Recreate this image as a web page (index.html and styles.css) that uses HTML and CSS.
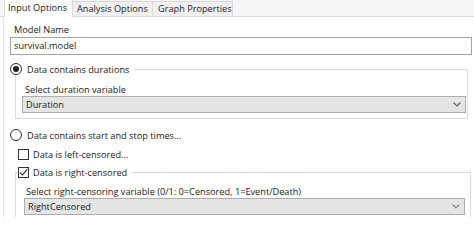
FILE: index.html
```html
<!DOCTYPE html>
<html>
<head>
<meta charset="utf-8">
<link rel="stylesheet" href="styles.css">
</head>
<body>
<div class="tabs">
  <div class="tab active">Input Options</div>
  <div class="tab t2">Analysis Options</div>
  <div class="tab t3">Graph Properties</div>
  <div class="tab-fill"></div>
</div>
<div class="panel">
  <div class="label name-label">Model Name</div>
  <div class="textbox">survival.model</div>

  <div class="group g1">
    <div class="ghead head-radio"><span class="radio on"></span><span>Data contains durations</span></div>
    <div class="label sub1">Select duration variable</div>
    <div class="select sel1"><span>Duration</span><svg class="chev" width="8" height="5" viewBox="0 0 8 5"><path d="M0.5 0.5 L4 4 L7.5 0.5" fill="none" stroke="#606060" stroke-width="1.1"/></svg></div>
  </div>

  <div class="option radio-row"><span class="radio"></span><span>Data contains start and stop times...</span></div>
  <div class="option check-row"><span class="check"></span><span>Data is left-censored...</span></div>

  <div class="group g2">
    <div class="ghead head-check"><span class="check"><svg width="9" height="9" viewBox="0 0 9 9"><path d="M1 4.6 L3.4 7 L8.2 1.4" fill="none" stroke="#222" stroke-width="1.1"/></svg></span><span>Data is right-censored</span></div>
    <div class="label sub2">Select right-censoring variable (0/1: 0=Censored, 1=Event/Death)</div>
    <div class="select sel2"><span>RightCensored</span><svg class="chev" width="8" height="5" viewBox="0 0 8 5"><path d="M0.5 0.5 L4 4 L7.5 0.5" fill="none" stroke="#8a8a8a" stroke-width="1.1"/></svg></div>
  </div>
</div>
</body>
</html>
```
FILE: styles.css
```css
html, body {
  margin: 0;
  padding: 0;
  background: #ffffff;
}
body {
  width: 474px;
  height: 217px;
  overflow: hidden;
  font-family: "Open Sans", "Noto Sans", sans-serif;
  font-size: 9.2px;
  color: #1b1b1b;
}
.tabs {
  display: flex;
  align-items: flex-end;
  height: 17px;
  box-sizing: border-box;
  border-bottom: 1px solid #dcdcdc;
  background: #f5f6f8;
  padding-left: 4px;
}
.tab {
  height: 15px;
  line-height: 14px;
  box-sizing: border-box;
  padding: 0 0 0 4px;
  border: 1px solid #d9d9d9;
  border-bottom: none;
  background: #f0f0f0;
  margin-left: -1px;
  white-space: nowrap;
  overflow: hidden;
}
.tab.active {
  width: 69px;
  height: 18px;
  line-height: 15px;
  margin-left: 0;
  margin-bottom: -1px;
  padding-left: 3px;
  background: #ffffff;
}
.t2 {
  width: 81px;
}
.t3 {
  width: 81px;
  padding-left: 5px;
}
.tab-fill {
  flex: 1;
}
.panel {
  margin-left: 3px;
  border-left: 1px solid #e3e3e3;
  padding: 6px 0 0 6px;
  height: 200px;
}
.label {
  line-height: 14px;
  white-space: nowrap;
}
.name-label {
  margin-left: 4px;
}
.textbox {
  width: 462px;
  height: 18px;
  box-sizing: border-box;
  border: 1px solid #a4a4a4;
  padding-left: 3px;
  line-height: 16px;
}
.group {
  border: 1px solid #dcdcdc;
  box-sizing: border-box;
  margin-left: 5px;
}
.g1 {
  margin-top: 14px;
  width: 453px;
  height: 50px;
}
.g2 {
  margin-top: 11px;
  width: 456px;
  height: 60px;
}
.ghead {
  display: flex;
  align-items: center;
  width: fit-content;
  height: 14px;
  margin-top: -8px;
  padding-right: 5px;
  background: #ffffff;
  white-space: nowrap;
}
.head-radio {
  margin-left: -6px;
}
.head-check {
  margin-left: 2px;
}
.radio {
  width: 12px;
  height: 12px;
  box-sizing: border-box;
  border: 1px solid #333333;
  border-radius: 50%;
  background: #ffffff;
  margin-right: 5px;
  display: flex;
  align-items: center;
  justify-content: center;
  flex: none;
}
.radio.on::after {
  content: "";
  width: 6px;
  height: 6px;
  border-radius: 50%;
  background: #222222;
}
.check {
  width: 11px;
  height: 11px;
  box-sizing: border-box;
  border: 1px solid #333333;
  background: #ffffff;
  margin-right: 4px;
  display: flex;
  align-items: center;
  justify-content: center;
  flex: none;
}
.option {
  display: flex;
  align-items: center;
  height: 14px;
  white-space: nowrap;
}
.radio-row {
  margin-top: 9px;
}
.check-row {
  margin-top: 5px;
  margin-left: 8px;
}
.sub1 {
  margin-top: 8px;
  margin-left: 9px;
  line-height: 12px;
}
.sub2 {
  margin-top: 7px;
  margin-left: 10px;
  line-height: 12px;
}
.select {
  height: 17px;
  box-sizing: border-box;
  border: 1px solid #adadad;
  background: #e5e5e5;
  padding: 0 4px 0 3px;
  display: flex;
  align-items: center;
  justify-content: space-between;
  line-height: 15px;
}
.sel1 {
  margin-left: 6px;
  width: 444px;
}
.sel2 {
  margin-left: 8px;
  width: 441px;
}
.chev {
  display: block;
}
```
